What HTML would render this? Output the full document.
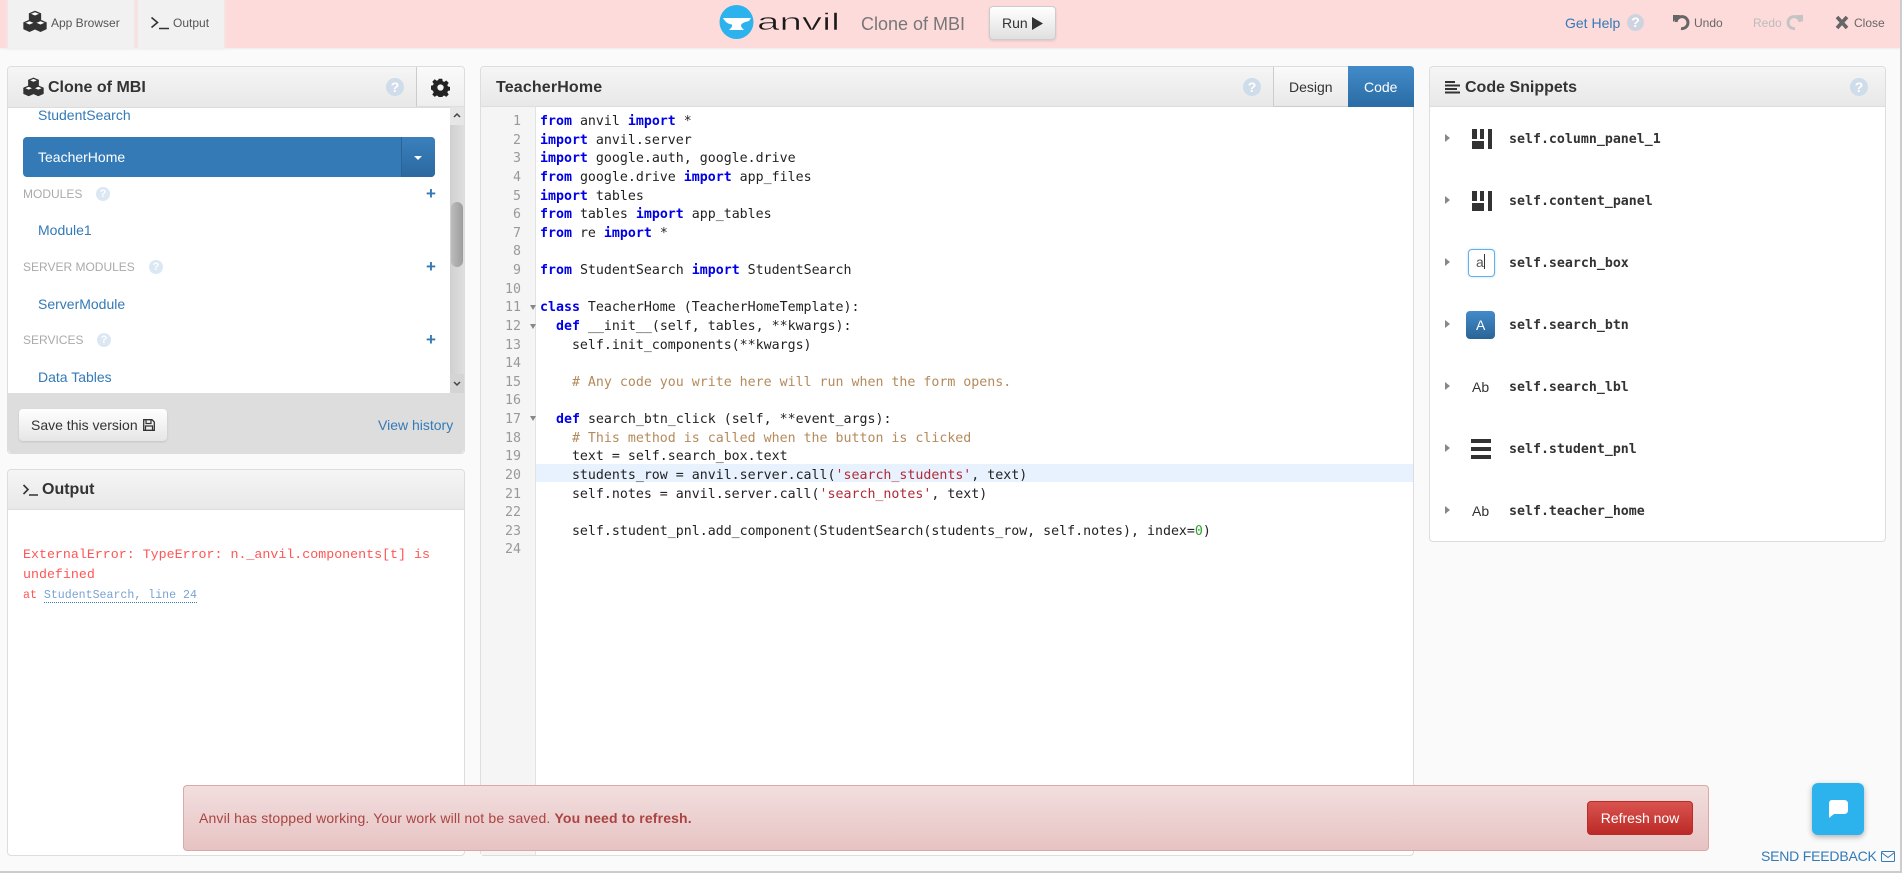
<!DOCTYPE html>
<html><head><meta charset="utf-8"><title>Anvil</title>
<style>
*{box-sizing:border-box}
html,body{margin:0;padding:0;width:1902px;height:873px;overflow:hidden;background:#fafafa;font-family:"Liberation Sans",sans-serif;font-size:14px;color:#333}
.a{position:absolute}
.t{position:absolute;white-space:nowrap;line-height:20px}
a,.l{color:#337ab7}
.panel{position:absolute;background:#fff;border:1px solid #ddd;border-radius:4px;overflow:hidden}
.b{font-weight:bold;font-size:16px;color:#333}
.q{position:absolute;width:18px;height:18px;border-radius:50%;background:#cfdcea;color:#fff;font-weight:bold;font-size:14px;line-height:18px;text-align:center}
.qs{width:14px;height:14px;font-size:11px;line-height:14px;background:#dbe7f3}
.cap{position:absolute;font-size:12px;color:#aaa;line-height:20px;white-space:nowrap}
.plus{position:absolute;color:#337ab7;font-weight:bold;font-size:17px;line-height:20px}
pre{margin:0;font-family:"DejaVu Sans Mono","Liberation Mono",monospace;font-size:13.28px;line-height:18.62px;color:#222}
.k{color:#0000e6;font-weight:bold}.c{color:#b58a5c}.s{color:#b02a37}.n{color:#2aa52a}
.snip{position:absolute;left:1509px;font-family:"DejaVu Sans Mono","Liberation Mono",monospace;font-weight:bold;font-size:13.28px;line-height:20px;color:#333;white-space:nowrap}
.arr{position:absolute;left:1445px;width:0;height:0;border-left:5px solid #888;border-top:4px solid transparent;border-bottom:4px solid transparent}
.bar{position:absolute;background:#333}
.ab{position:absolute;left:1472px;font-size:14px;line-height:20px;color:#333}
.btn{position:absolute;border-radius:4px;background:linear-gradient(#fff,#e0e0e0);border:1px solid #ccc;box-shadow:0 1px 2px rgba(0,0,0,.12)}
.f{position:absolute;left:530px;width:0;height:0;border-top:5px solid #888;border-left:3px solid transparent;border-right:3px solid transparent}
</style></head><body>
<svg width="0" height="0" style="position:absolute"><defs>
<symbol id="cubes" viewBox="0 0 24 24"><g stroke="#333" stroke-width="1.300" stroke-linejoin="round">
<path d="M12 1.500 17.500 3.800V9.500L12 12 6.500 9.500V3.800Z" fill="#333"/><path d="M12 1.500 17.500 3.800 12 6.200 6.500 3.800Z" fill="#fff"/>
<path d="M6.500 10.500 12 12.800V18.800L6.500 21.300 1 18.800V12.800Z" fill="#333"/><path d="M6.500 10.500 12 12.800 6.500 15.200 1 12.800Z" fill="#fff"/>
<path d="M17.500 10.500 23 12.800V18.800L17.500 21.300 12 18.800V12.800Z" fill="#333"/><path d="M17.500 10.500 23 12.800 17.500 15.200 12 12.800Z" fill="#fff"/></g></symbol>
</defs></svg>

<!-- top bar -->
<div class="a" style="left:0;top:0;width:1900px;height:48px;background:#fedbdb;box-shadow:0 1px 2px rgba(0,0,0,.06)"></div>
<div class="a" style="left:8px;top:0;width:126px;height:48px;background:#f1f1f1;box-shadow:0 0 3px 1px rgba(238,238,238,.8)"></div>
<div class="a" style="left:138px;top:0;width:86px;height:48px;background:#f1f1f1;box-shadow:0 0 3px 1px rgba(238,238,238,.8)"></div>
<svg class="a" style="left:22px;top:10px" width="26" height="24"><use href="#cubes"/></svg>
<div class="t" style="left:51px;top:13px;font-size:12px;color:#555">App Browser</div>
<svg class="a" style="left:150px;top:16px" width="24" height="14"><path d="M1.500 1.500 7.500 6.500 1.500 11.500" fill="none" stroke="#333" stroke-width="1.600"/><path d="M9 12.500H19" stroke="#333" stroke-width="1.500"/></svg>
<div class="t" style="left:173px;top:13px;font-size:12px;color:#555">Output</div>

<svg class="a" style="left:718px;top:4px" width="130" height="38">
<circle cx="18.500" cy="18" r="17" fill="#2cb2ec"/>
<path d="M5 14H33L31 17C27 18 24 19 23 21 23 23 24 24 26 26H11C13 24 14.500 23 14 20.500 10 20 7 18 5 14Z" fill="#fff"/>
<text x="39" y="26" font-family="Liberation Sans" font-size="24" fill="#1a1a1a" stroke="#fedbdb" stroke-width=".5" textLength="83" lengthAdjust="spacingAndGlyphs">anvil</text>
</svg>
<div class="t" style="left:861px;top:14px;font-size:18px;color:#777">Clone of MBI</div>
<div class="btn" style="left:989px;top:6px;width:67px;height:34px"></div>
<div class="t" style="left:1002px;top:13px;font-size:14px;color:#333">Run</div>
<svg class="a" style="left:1032px;top:17px" width="12" height="13"><path d="M0 0 11 6.500 0 13Z" fill="#333"/></svg>

<div class="t l" style="left:1565px;top:13px;font-size:14px">Get Help</div>
<div class="q" style="left:1627px;top:14px;width:17px;height:17px;line-height:17px;background:#cfd3e0">?</div>
<svg class="a" style="left:1672px;top:13px" width="18" height="18"><path d="M4 9A6 6 0 1 1 9 15.500" fill="none" stroke="#666" stroke-width="3"/><path d="M1 2 8 2 1 9Z" fill="#666"/></svg>
<div class="t" style="left:1694px;top:13px;font-size:12px;color:#666">Undo</div>
<div class="t" style="left:1753px;top:13px;font-size:12px;color:#bbb">Redo</div>
<svg class="a" style="left:1786px;top:13px" width="18" height="18"><path d="M14 9A6 6 0 1 0 9 15.500" fill="none" stroke="#c4c4c4" stroke-width="3"/><path d="M17 2 10 2 17 9Z" fill="#c4c4c4"/></svg>
<svg class="a" style="left:1835px;top:15px" width="14" height="15"><path d="M2 2 12 13M12 2 2 13" stroke="#666" stroke-width="3.600"/></svg>
<div class="t" style="left:1854px;top:13px;font-size:12px;color:#666">Close</div>

<!-- left panel -->
<div class="panel" style="left:7px;top:66px;width:458px;height:388px"></div>
<div class="a" style="left:8px;top:67px;width:456px;height:41px;background:linear-gradient(#f5f5f5,#e8e8e8);border-bottom:1px solid #ddd;border-radius:4px 4px 0 0"></div>
<svg class="a" style="left:22px;top:77px" width="23" height="21"><use href="#cubes"/></svg>
<div class="t b" style="left:48px;top:78px">Clone of MBI</div>
<div class="q" style="left:386px;top:78px">?</div>
<div class="a" style="left:416px;top:67px;width:48px;height:40px;background:linear-gradient(#fafafa,#eee);border-left:1px solid #ccc;border-bottom:1px solid #ddd;border-radius:0 4px 0 0"></div>
<svg class="a" style="left:431px;top:78px" width="19" height="19" viewBox="0 0 24 24"><path fill="#222" fill-rule="evenodd" d="M9.800 1h4.400l.6 3.100 1.900.8 2.600-1.800 3.100 3.100-1.800 2.600.8 1.900 3.100.6v4.400l-3.100.6-.8 1.900 1.800 2.600-3.100 3.100-2.600-1.800-1.900.8-.6 3.100H9.800l-.6-3.100-1.900-.8-2.600 1.800-3.100-3.100 1.800-2.600-.8-1.900L-.5 14.200V9.800l3.100-.6.8-1.900L1.600 4.700l3.100-3.100 2.600 1.800 1.900-.8ZM12 8a4 4 0 1 0 0 8 4 4 0 0 0 0-8Z"/></svg>

<div class="t l" style="left:38px;top:105px">StudentSearch</div>
<div class="a" style="left:23px;top:137px;width:412px;height:40px;background:#337ab7;border-radius:4px"></div>
<div class="a" style="left:401px;top:137px;width:34px;height:40px;background:linear-gradient(#3a80bd,#2b699f);border-left:1px solid #2a6496;border-radius:0 4px 4px 0"></div>
<div class="a" style="left:414px;top:156px;width:0;height:0;border-top:4px solid #fff;border-left:4px solid transparent;border-right:4px solid transparent"></div>
<div class="t" style="left:38px;top:147px;color:#fff">TeacherHome</div>
<div class="cap" style="left:23px;top:184px">MODULES</div><div class="q qs" style="left:96px;top:187px">?</div><div class="plus" style="left:426px;top:184px">+</div>
<div class="t l" style="left:38px;top:220px">Module1</div>
<div class="cap" style="left:23px;top:257px">SERVER MODULES</div><div class="q qs" style="left:149px;top:260px">?</div><div class="plus" style="left:426px;top:257px">+</div>
<div class="t l" style="left:38px;top:294px">ServerModule</div>
<div class="cap" style="left:23px;top:330px">SERVICES</div><div class="q qs" style="left:97px;top:333px">?</div><div class="plus" style="left:426px;top:330px">+</div>
<div class="t l" style="left:38px;top:367px">Data Tables</div>

<div class="a" style="left:450px;top:107px;width:14px;height:286px;background:linear-gradient(90deg,#d0d0d0,#dedede)"></div>
<div class="a" style="left:450px;top:107px;width:14px;height:18px;background:#e6e6e6"></div>
<div class="a" style="left:450px;top:374px;width:14px;height:19px;background:#d4d4d4"></div>
<div class="a" style="left:451px;top:202px;width:12px;height:65px;border-radius:6px;background:linear-gradient(90deg,#bcbcbc,#9d9d9d)"></div>
<svg class="a" style="left:453px;top:112px" width="8" height="6"><path d="M1 5 4 2 7 5" fill="none" stroke="#444" stroke-width="1.500"/></svg>
<svg class="a" style="left:453px;top:381px" width="8" height="6"><path d="M1 1 4 4 7 1" fill="none" stroke="#444" stroke-width="1.500"/></svg>

<div class="a" style="left:8px;top:393px;width:456px;height:60px;background:#ddd;border-radius:0 0 4px 4px"></div>
<div class="btn" style="left:19px;top:409px;width:148px;height:32px;background:linear-gradient(#fff,#e6e6e6);border:0"></div>
<div class="t" style="left:31px;top:415px;color:#333">Save this version</div>
<svg class="a" style="left:143px;top:419px" width="12" height="12"><path d="M.7.7H9L11.300 3V11.300H.7Z" fill="none" stroke="#333" stroke-width="1.300"/><path d="M3 1V4.500H8V1M2.500 11V7H9.500V11" fill="none" stroke="#333" stroke-width="1.200"/></svg>
<div class="t l" style="left:378px;top:415px">View history</div>

<!-- output panel -->
<div class="panel" style="left:7px;top:469px;width:458px;height:387px"></div>
<div class="a" style="left:8px;top:470px;width:456px;height:40px;background:linear-gradient(#f5f5f5,#e8e8e8);border-bottom:1px solid #ddd;border-radius:4px 4px 0 0"></div>
<svg class="a" style="left:23px;top:483px" width="16" height="14"><path d="M.5 2 5 6.500 .5 11" fill="none" stroke="#333" stroke-width="1.600"/><path d="M6 12H15" stroke="#333" stroke-width="1.500"/></svg>
<div class="t b" style="left:42px;top:480px">Output</div>
<div class="t" style="left:23px;top:545px;font-family:'Liberation Mono',monospace;font-size:13.3px;color:#f55">ExternalError: TypeError: n._anvil.components[t] is</div>
<div class="t" style="left:23px;top:565px;font-family:'Liberation Mono',monospace;font-size:13.3px;color:#f55">undefined</div>
<div class="t" style="left:23px;top:586px;font-family:'Liberation Mono',monospace;font-size:11.6px;color:#f55">at <span style="color:#7ba3d0;border-bottom:1px dotted #337ab7">StudentSearch, line 24</span></div>

<!-- middle panel -->
<div class="panel" style="left:480px;top:66px;width:934px;height:790px"></div>
<div class="a" style="left:481px;top:67px;width:932px;height:40px;background:linear-gradient(#f5f5f5,#e8e8e8);border-bottom:1px solid #ddd;border-radius:4px 4px 0 0"></div>
<div class="t b" style="left:496px;top:78px;letter-spacing:.15px">TeacherHome</div>
<div class="q" style="left:1243px;top:78px">?</div>
<div class="a" style="left:1273px;top:67px;width:75px;height:40px;background:linear-gradient(#fafafa,#e8e8e8);border-left:1px solid #ccc;border-bottom:1px solid #ccc"></div>
<div class="a" style="left:1348px;top:66px;width:66px;height:41px;background:linear-gradient(#428bca,#2a6ca4);border-radius:0 4px 0 0"></div>
<div class="t" style="left:1289px;top:77px;color:#333">Design</div>
<div class="t" style="left:1364px;top:77px;color:#fff">Code</div>

<div class="a" style="left:481px;top:107px;width:55px;height:748px;background:#f5f5f5;border-right:1px solid #e2e2e2"></div>
<div class="a" style="left:536px;top:464px;width:877px;height:18px;background:#e8f2fe"></div>
<pre class="a" style="left:481px;top:113px;width:40px;text-align:right;color:#999">1
2
3
4
5
6
7
8
9
10
11
12
13
14
15
16
17
18
19
20
21
22
23
24</pre>
<div class="f" style="top:305px"></div><div class="f" style="top:324px"></div><div class="f" style="top:416px"></div>
<pre class="a" style="left:540px;top:113px"><span class="k">from</span> anvil <span class="k">import</span> *
<span class="k">import</span> anvil.server
<span class="k">import</span> google.auth, google.drive
<span class="k">from</span> google.drive <span class="k">import</span> app_files
<span class="k">import</span> tables
<span class="k">from</span> tables <span class="k">import</span> app_tables
<span class="k">from</span> re <span class="k">import</span> *

<span class="k">from</span> StudentSearch <span class="k">import</span> StudentSearch

<span class="k">class</span> TeacherHome (TeacherHomeTemplate):
  <span class="k">def</span> __init__(self, tables, **kwargs):
    self.init_components(**kwargs)

    <span class="c"># Any code you write here will run when the form opens.</span>

  <span class="k">def</span> search_btn_click (self, **event_args):
    <span class="c"># This method is called when the button is clicked</span>
    text = self.search_box.text
    students_row = anvil.server.call(<span class="s">'search_students'</span>, text)
    self.notes = anvil.server.call(<span class="s">'search_notes'</span>, text)

    self.student_pnl.add_component(StudentSearch(students_row, self.notes), index=<span class="n">0</span>)
</pre>

<!-- right panel -->
<div class="panel" style="left:1429px;top:66px;width:457px;height:476px"></div>
<div class="a" style="left:1430px;top:67px;width:455px;height:40px;background:linear-gradient(#f5f5f5,#e8e8e8);border-bottom:1px solid #ddd;border-radius:4px 4px 0 0"></div>
<svg class="a" style="left:1445px;top:81px" width="16" height="13"><path d="M0 1H10M0 4.500H15M0 8H12M0 11.500H15" stroke="#333" stroke-width="2"/></svg>
<div class="t b" style="left:1465px;top:78px">Code Snippets</div>
<div class="q" style="left:1850px;top:78px">?</div>

<div class="arr" style="top:134px"></div><div class="arr" style="top:196px"></div><div class="arr" style="top:258px"></div><div class="arr" style="top:320px"></div><div class="arr" style="top:382px"></div><div class="arr" style="top:444px"></div><div class="arr" style="top:506px"></div>

<div class="bar" style="left:1472px;top:129px;width:5px;height:10px"></div><div class="bar" style="left:1480px;top:129px;width:4px;height:10px"></div><div class="bar" style="left:1472px;top:141px;width:12px;height:8px"></div><div class="bar" style="left:1488px;top:129px;width:4px;height:20px"></div>
<div class="bar" style="left:1472px;top:191px;width:5px;height:10px"></div><div class="bar" style="left:1480px;top:191px;width:4px;height:10px"></div><div class="bar" style="left:1472px;top:203px;width:12px;height:8px"></div><div class="bar" style="left:1488px;top:191px;width:4px;height:20px"></div>

<div class="a" style="left:1468px;top:249px;width:27px;height:28px;border:1px solid #66afe9;border-radius:4px;background:#fff;box-shadow:0 0 2px rgba(102,175,233,.5)"></div>
<div class="t" style="left:1476px;top:252px;font-size:14px;color:#555">a</div>
<div class="a" style="left:1484px;top:254px;width:1px;height:15px;background:#333"></div>

<div class="a" style="left:1466px;top:311px;width:29px;height:28px;border-radius:4px;background:linear-gradient(#428bca,#2a6496)"></div>
<div class="t" style="left:1476px;top:315px;color:#fff;font-size:14px">A</div>

<div class="ab" style="top:377px">Ab</div>
<div class="bar" style="left:1471px;top:439px;width:20px;height:4px"></div><div class="bar" style="left:1471px;top:447px;width:20px;height:4px"></div><div class="bar" style="left:1471px;top:455px;width:20px;height:4px"></div>
<div class="ab" style="top:501px">Ab</div>

<div class="snip" style="top:130px">self.column_panel_1</div>
<div class="snip" style="top:192px">self.content_panel</div>
<div class="snip" style="top:254px">self.search_box</div>
<div class="snip" style="top:316px">self.search_btn</div>
<div class="snip" style="top:378px">self.search_lbl</div>
<div class="snip" style="top:440px">self.student_pnl</div>
<div class="snip" style="top:502px">self.teacher_home</div>

<!-- alert -->
<div class="a" style="left:183px;top:785px;width:1526px;height:66px;background:linear-gradient(#f2dede,#e7c3c3);border:1px solid #dca7a7;border-radius:4px"></div>
<div class="t" style="left:199px;top:808px;color:#a94442;letter-spacing:.15px">Anvil has stopped working. Your work will not be saved. <b>You need to refresh.</b></div>
<div class="a" style="left:1587px;top:801px;width:106px;height:34px;background:linear-gradient(#d9534f,#bb2a26);border:1px solid #b92c28;border-radius:4px;color:#fff;text-align:center;line-height:32px">Refresh now</div>

<!-- chat -->
<div class="a" style="left:1812px;top:783px;width:52px;height:52px;background:#2cb2ec;border-radius:6px;box-shadow:0 2px 6px rgba(0,0,0,.3)"></div>
<svg class="a" style="left:1827px;top:799px" width="22" height="20"><path d="M5 1H17Q21 1 21 5V11Q21 15 17 15H7L2 19V5Q2 1 5 1Z" fill="#fff"/></svg>
<div class="t l" style="left:1761px;top:846px;letter-spacing:-.2px">SEND FEEDBACK</div>
<svg class="a" style="left:1881px;top:851px" width="14" height="11"><rect x=".5" y=".5" width="13" height="10" rx="1" fill="none" stroke="#337ab7"/><path d="M.5 1.500 7 6.500 13.500 1.500" fill="none" stroke="#337ab7"/></svg>

<div class="a" style="left:0;top:871px;width:1902px;height:2px;background:#ccc"></div>
<div class="a" style="left:1900px;top:0;width:2px;height:873px;background:#ccc"></div>
</body></html>
